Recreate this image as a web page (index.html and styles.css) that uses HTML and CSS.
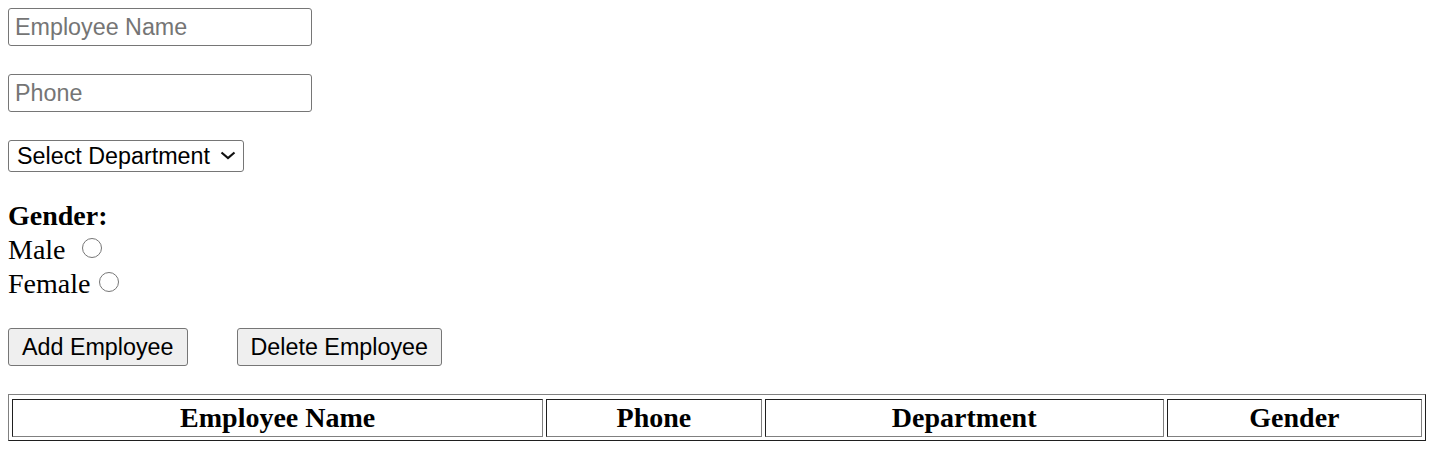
FILE: index.html
```html
<!DOCTYPE html>
<html>
<head>
<meta charset="utf-8">
<title>Employees</title>
<link rel="stylesheet" href="styles.css">
</head>
<body>
<form class="form">
  <input class="field" type="text" placeholder="Employee Name">
  <input class="field" type="text" placeholder="Phone">
  <span class="select-wrap">
    <select class="select">
      <option>Select Department</option>
      <option>HR</option>
      <option>IT</option>
      <option>Finance</option>
    </select>
    <svg class="chevron" width="16" height="9" viewBox="0 0 16 9"><polyline points="1.5,1.5 8,7 14.5,1.5" fill="none" stroke="#111" stroke-width="2.2"/></svg>
  </span>
  <div class="gender">
    <div class="gender-title"><b>Gender:</b></div>
    <div class="radio-row">Male <input class="radio" type="radio" name="gender"></div>
    <div class="radio-row">Female<input class="radio" type="radio" name="gender"></div>
  </div>
  <div class="buttons">
    <button class="btn" type="button">Add Employee</button>
    <button class="btn" type="button">Delete Employee</button>
  </div>
</form>
<table class="table">
  <thead>
    <tr>
      <th class="c-name">Employee Name</th>
      <th class="c-phone">Phone</th>
      <th class="c-dept">Department</th>
      <th class="c-gender">Gender</th>
    </tr>
  </thead>
</table>
</body>
</html>
```
FILE: styles.css
```css
html, body {
  background: #fff;
}
body {
  margin: 8px;
  font-family: "Liberation Serif", "Times New Roman", serif;
  font-size: 28px;
  color: #000;
}
.form {
  display: flex;
  flex-direction: column;
  align-items: flex-start;
  margin: 0;
}
.field {
  display: block;
  box-sizing: border-box;
  width: 304px;
  height: 38px;
  margin: 0 0 28px 0;
  padding: 1px 6px;
  border: 1px solid #767676;
  border-radius: 3px;
  font-family: "Liberation Sans", Arial, sans-serif;
  font-size: 23.3px;
  color: #000;
  background: #fff;
  outline: none;
}
.field::placeholder {
  color: #757575;
}
.select-wrap {
  position: relative;
  display: block;
  width: 236px;
  height: 32px;
  margin-top: -1px;
  margin-bottom: 29px;
}
.select {
  appearance: none;
  -webkit-appearance: none;
  box-sizing: border-box;
  width: 236px;
  height: 32px;
  margin: 0;
  padding: 0 30px 0 8px;
  border: 1px solid #767676;
  border-radius: 3px;
  background: #fff;
  font-family: "Liberation Sans", Arial, sans-serif;
  font-size: 23.3px;
  color: #000;
}
.chevron {
  position: absolute;
  left: 212px;
  top: 12px;
  pointer-events: none;
}
.gender {
  display: block;
}
.gender-title {
  height: 33px;
  line-height: 32px;
}
.radio-row {
  height: 34px;
  line-height: 34px;
  white-space: nowrap;
}
.radio {
  appearance: none;
  -webkit-appearance: none;
  box-sizing: border-box;
  width: 20px;
  height: 20px;
  margin: 0 0 1px 9px;
  border: 1.6px solid #767676;
  border-radius: 50%;
  background: #fff;
  vertical-align: baseline;
}
.buttons {
  display: flex;
  gap: 49px;
  margin-top: 27px;
  margin-bottom: 28px;
}
.btn {
  box-sizing: border-box;
  height: 38px;
  margin: 0;
  padding: 0 13px;
  border: 1px solid #767676;
  border-radius: 3px;
  background: #efefef;
  font-family: "Liberation Sans", Arial, sans-serif;
  font-size: 23.3px;
  color: #000;
}
.table {
  width: 100%;
  table-layout: fixed;
  border-collapse: separate;
  border-spacing: 3px;
  padding-top: 1px;
  border: 1px solid;
  border-color: #808080 #1f1f1f #1f1f1f #808080;
}
.table th {
  box-sizing: border-box;
  padding: 2px 2px 3px;
  border: 1px solid;
  border-color: #1f1f1f #808080 #808080 #1f1f1f;
  font-weight: bold;
  text-align: center;
  line-height: 31px;
}
.c-name { width: 531px; }
.c-phone { width: 215px; }
.c-dept { width: 399px; }
.c-gender { width: 255px; }
```
